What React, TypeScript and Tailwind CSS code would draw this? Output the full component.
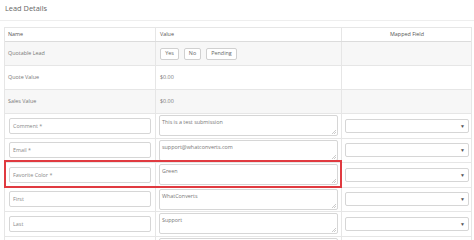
import React from "react";

const font = { fontFamily: '"Open Sans", "Noto Sans", sans-serif' };

function Caret() {
  return <span className="absolute right-[3px] top-[4px] text-[5px] leading-none text-[#555]">▼</span>;
}

function Select() {
  return (
    <div className="relative mx-[3px] h-[14px] rounded-[2px] border border-[#d6d6d6] bg-white">
      <Caret />
    </div>
  );
}

function Textarea({ value }: { value: string }) {
  return (
    <div className="relative mx-[3px] mt-[1px] h-[21px] rounded-[2px] border border-[#d6d6d6] bg-white px-[2px] pt-[2px] text-[5.4px] text-[#777]">
      {value}
      <svg className="absolute bottom-[1px] right-[1px]" width="4" height="4" viewBox="0 0 4 4">
        <path d="M4 0L0 4M4 2L2 4" stroke="#aaa" strokeWidth="0.6" />
      </svg>
    </div>
  );
}

function InputRow({ name, value, highlight, partial }: { name: string; value: string; highlight?: boolean; partial?: boolean }) {
  return (
    <div className={`relative grid h-[24.5px] grid-cols-[151px_186px_130px] border-b border-[#e6e6e6] ${highlight ? "z-10" : ""}`}>
      <div className="flex items-center border-r border-[#e6e6e6] px-[4px]">
        {!partial && (
          <div className="flex h-[16px] w-full items-center rounded-[2px] border border-[#d6d6d6] bg-white px-[3px] text-[5.4px] text-[#888]">
            {name}
          </div>
        )}
      </div>
      <div className="border-r border-[#e6e6e6]">
        <Textarea value={value} />
      </div>
      <div className="flex items-center">
        {!partial && (
          <div className="w-full">
            <Select />
          </div>
        )}
      </div>
      {highlight && (
        <div className="pointer-events-none absolute left-[-1px] top-[-3px] h-[28px] w-[338px] border-2 border-[#e03a40]" />
      )}
    </div>
  );
}

function TextRow({ name, gray, children }: { name: string; gray?: boolean; children: React.ReactNode }) {
  return (
    <div className={`grid h-[24px] grid-cols-[151px_186px_130px] border-b border-[#e6e6e6] text-[5.4px] text-[#777] ${gray ? "bg-[#f7f7f7]" : "bg-white"}`}>
      <div className="flex items-center border-r border-[#e6e6e6] px-[3px]">{name}</div>
      <div className="flex items-center gap-[5px] border-r border-[#e6e6e6] px-[4px]">{children}</div>
      <div />
    </div>
  );
}

function Btn({ label, w }: { label: string; w: string }) {
  return (
    <div className={`flex h-[12px] items-center justify-center rounded-[2px] border border-[#d0d0d0] bg-white text-[5.4px] text-[#666] ${w}`}>
      {label}
    </div>
  );
}

export default function App() {
  return (
    <div className="h-[240px] w-[474px] overflow-hidden bg-white" style={font}>
      <div className="px-[5px] pt-[3px] text-[7.4px] leading-[10px] text-[#666]">Lead Details</div>
      <div className="mt-[7px] border-t border-[#eeeeee]" />
      <div className="ml-[4px] mt-[6px] w-[468px] border-l border-r border-t border-[#e6e6e6]">
        {/* header */}
        <div className="grid h-[14px] grid-cols-[151px_186px_130px] border-b border-[#dcdcdc] text-[5.4px] text-[#555]">
          <div className="flex items-center border-r border-[#e6e6e6] px-[3px]">Name</div>
          <div className="flex items-center border-r border-[#e6e6e6] px-[4px]">Value</div>
          <div className="flex items-center justify-center">Mapped Field</div>
        </div>

        <TextRow name="Quotable Lead" gray>
          <Btn label="Yes" w="w-[19px]" />
          <Btn label="No" w="w-[17px]" />
          <Btn label="Pending" w="w-[31px]" />
        </TextRow>
        <TextRow name="Quote Value">$0.00</TextRow>
        <TextRow name="Sales Value" gray>$0.00</TextRow>

        <InputRow name="Comment *" value="This is a test submission" />
        <InputRow name="Email *" value="support@whatconverts.com" />
        <InputRow name="Favorite Color *" value="Green" highlight />
        <InputRow name="First" value="WhatConverts" />
        <InputRow name="Last" value="Support" />
        <InputRow name="" value="" partial />
      </div>
    </div>
  );
}
